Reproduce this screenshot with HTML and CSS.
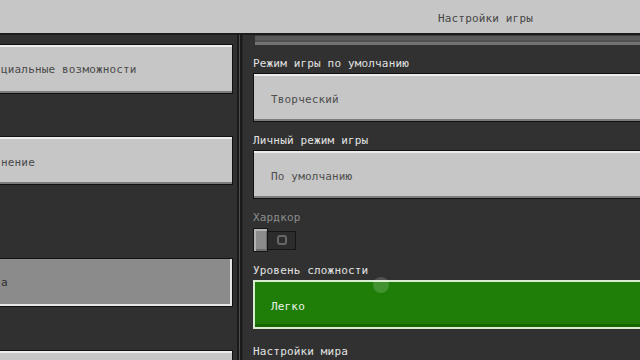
FILE: index.html
```html
<!DOCTYPE html>
<html lang="ru">
<head>
    <meta charset="utf-8">
    <meta name="viewport" content="width=device-width, initial-scale=1.0">
    <title>Настройки игры</title>
    <link rel="stylesheet" href="styles.css">
</head>
<body>
    <div class="screen">
        <header class="top-bar">
            <div></div>
            <div></div>
            <h1 class="title">Настройки игры</h1>
        </header>

        <div class="layout">
            <!-- левое меню разделов, прокручено за край экрана -->
            <nav class="side-nav">
                <button class="nav-btn nav-first">циальные возможности</button>
                <button class="nav-btn nav-second">нение</button>
                <button class="nav-btn nav-third active">а</button>
                <button class="nav-btn nav-fourth"></button>
            </nav>

            <div class="divider"></div>

            <!-- настройки выбранного раздела -->
            <main class="settings">
                <div class="scroll-edge"></div>

                <div class="label first">Режим игры по умолчанию</div>
                <button class="option">Творческий</button>

                <div class="label">Личный режим игры</div>
                <button class="option">По умолчанию</button>

                <div class="label disabled">Хардкор</div>
                <div class="toggle">
                    <span class="knob"></span>
                    <span class="track"><span class="ring"></span></span>
                </div>

                <div class="label">Уровень сложности</div>
                <button class="option selected">Легко</button>

                <div class="label section">Настройки мира</div>

                <span class="touch-dot"></span>
            </main>
        </div>
    </div>
</body>
</html>
```

FILE: styles.css
```css
body {
    margin: 0;
    width: 640px;
    height: 360px;
    overflow: hidden;
    background-color: #313131;
    font-family: 'DejaVu Sans Mono', 'Liberation Mono', monospace;
    font-size: 11px;
    line-height: 13px;
    letter-spacing: 0.16px;
}

.screen {
    width: 774px;
    margin-left: -46px;
}

.top-bar {
    display: grid;
    grid-template-columns: 283px 6px 485px;
    height: 33px;
    background-color: #c6c6c6;
    border-bottom: 2px solid #1c1c1c;
}

.title {
    margin: 0;
    padding-top: 12px;
    font-size: 11px;
    font-weight: normal;
    text-align: center;
    color: #464646;
}

.layout {
    display: grid;
    grid-template-columns: 283px 6px 485px;
    height: 325px;
}

.side-nav {
    display: flex;
    flex-direction: column;
    padding: 0 4px 0 9px;
    background-color: #303030;
}

button {
    font: inherit;
    letter-spacing: inherit;
    text-align: left;
    cursor: pointer;
}

.nav-btn {
    flex-shrink: 0;
    height: 49px;
    padding: 18px 0 0 37px;
    border: 1px solid #111;
    background-color: #c6c6c6;
    color: #4a4a4a;
    white-space: nowrap;
    box-shadow: inset 0 2px #ececec, inset 0 -2px #7c7c7c;
    display: flex;
    align-items: flex-start;
}

.nav-first {
    margin-top: 9px;
    height: 50px;
}

.nav-second {
    margin-top: 42px;
    padding-top: 19px;
}

.nav-third {
    margin-top: 73px;
    padding-top: 17px;
}

.nav-fourth {
    margin-top: 43px;
}

.nav-btn.active {
    background-color: #8b8b8b;
    color: #303030;
    box-shadow: inset -2px -2px #e6e6e6;
}

.divider {
    background: linear-gradient(to right, #1a1a1a 0 2px, #4e4e4e 2px 3px, #1a1a1a 3px 5px, #262626 5px 6px);
}

.settings {
    position: relative;
    display: flex;
    flex-direction: column;
    padding: 0 10px;
    background-color: #313131;
}

.scroll-edge {
    height: 10px;
    margin-left: 2px;
    background: linear-gradient(to bottom, #3d3d3d 0 1px, #5a5a5a 1px 5px, #505050 5px 7px, #727272 7px 10px);
}

.label {
    margin-top: 12px;
    color: #e2e2e2;
}

.label.disabled {
    color: #8c8c8c;
}

.label.section {
    margin-top: 16px;
}

.option {
    height: 49px;
    margin-top: 3px;
    padding: 19px 0 0 17px;
    border: 1px solid #111;
    background-color: #c6c6c6;
    color: #4e4e4e;
    box-shadow: inset 0 2px #ececec, inset 0 -2px #7c7c7c;
    display: flex;
    align-items: flex-start;
}

.option.selected {
    border: 2px solid #d8eccf;
    padding: 18px 0 0 16px;
    background-color: #1e7e08;
    color: #eaf4e4;
    box-shadow: inset 0 -3px #176606;
}

.toggle {
    display: flex;
    align-items: center;
    margin-top: 4px;
    height: 24px;
}

.knob {
    box-sizing: border-box;
    width: 15px;
    height: 24px;
    border: 1px solid #151515;
    background-color: #8c8c8c;
    box-shadow: inset 2px 2px #b4b4b4, inset -1px -2px #6a6a6a;
}

.track {
    box-sizing: border-box;
    display: flex;
    align-items: center;
    justify-content: center;
    width: 28px;
    height: 19px;
    border: 1px solid #161616;
    border-left: none;
    background-color: #2c2c2c;
}

.ring {
    width: 6px;
    height: 6px;
    border: 2px solid #666;
    border-radius: 3px;
}

/* след касания поверх кнопки */
.touch-dot {
    position: absolute;
    left: 130px;
    top: 242px;
    width: 16px;
    height: 16px;
    border-radius: 50%;
    background-color: rgba(255, 255, 255, 0.16);
}
```
